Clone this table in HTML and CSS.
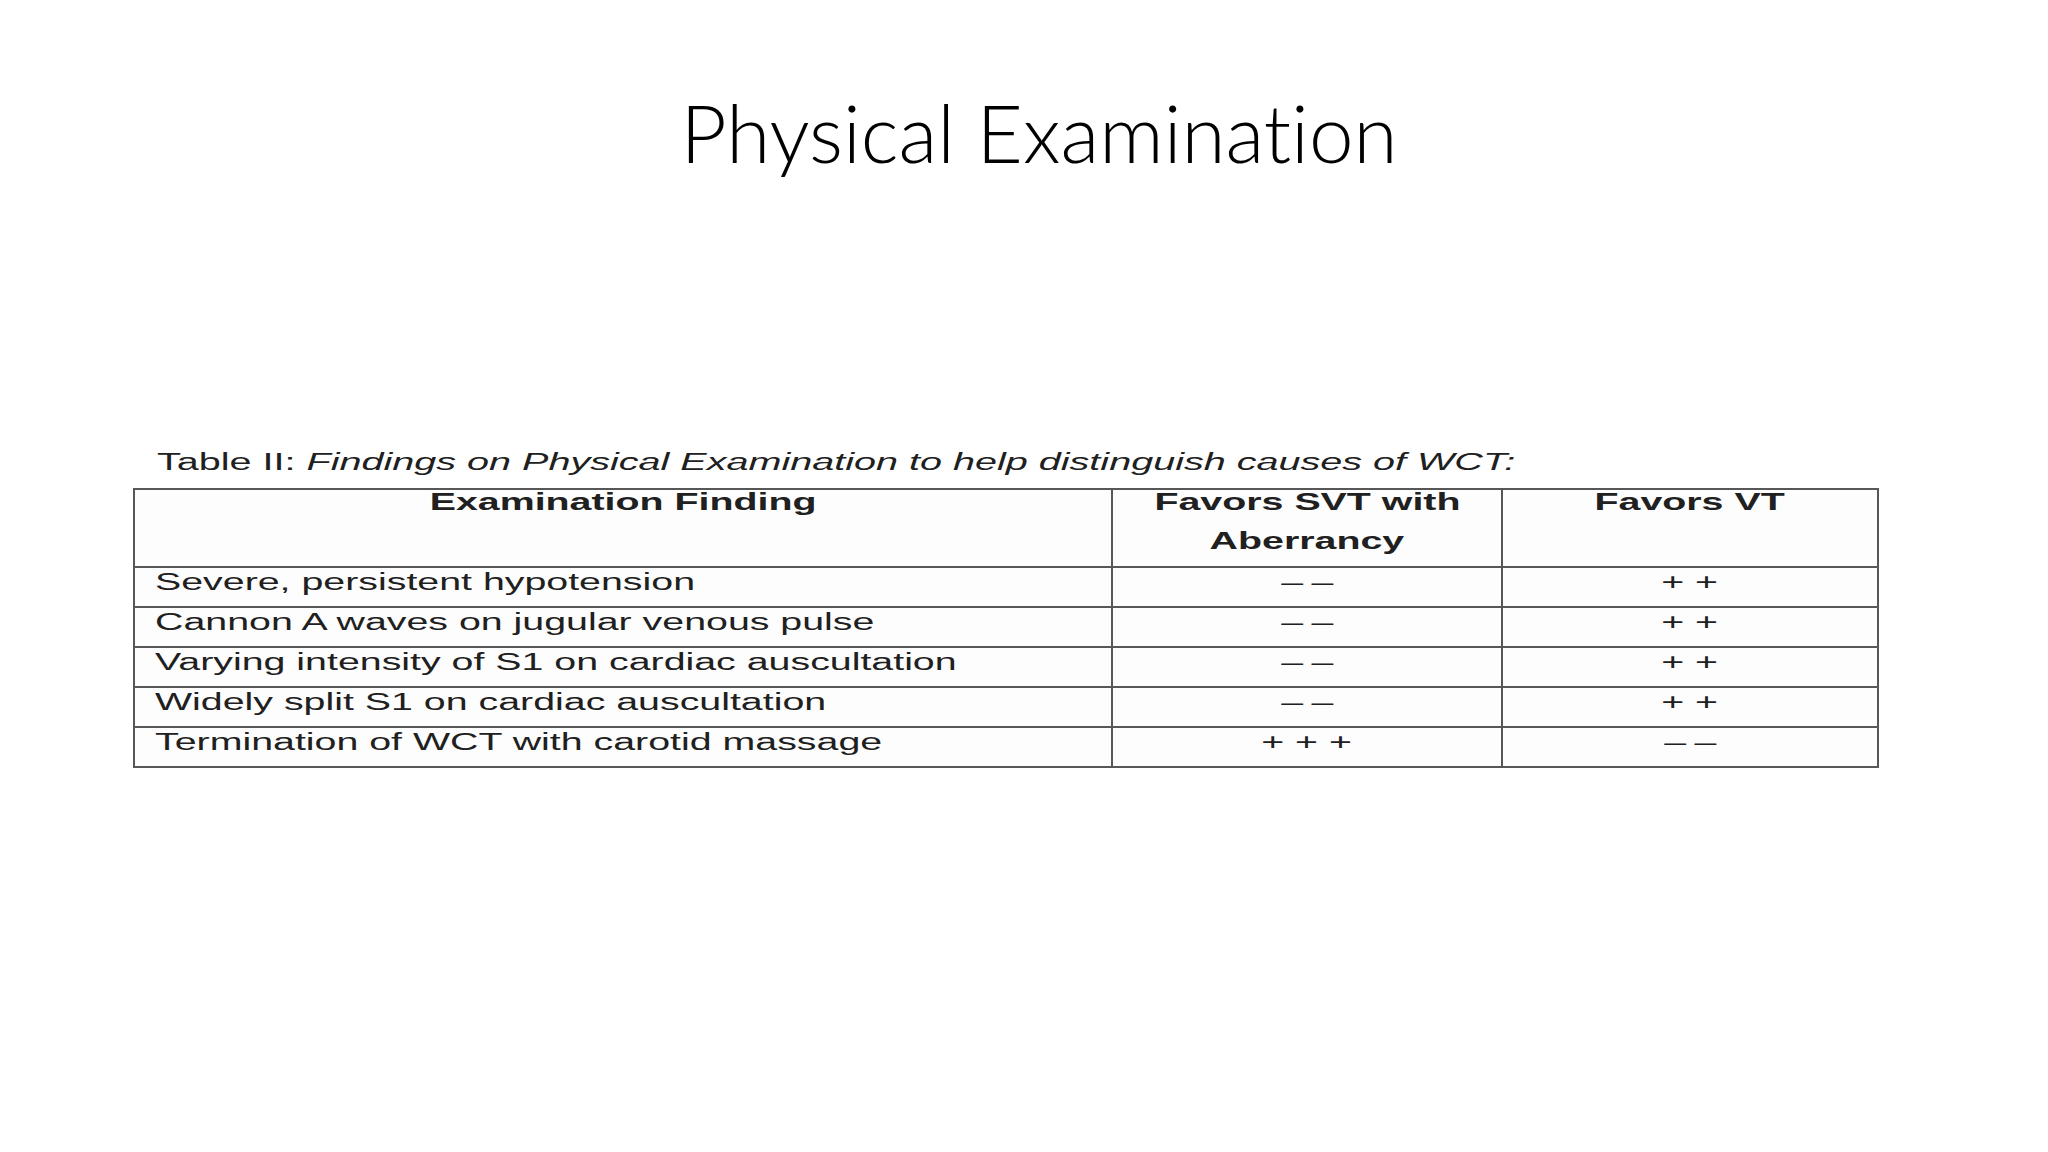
FILE: index.html
```html
<!DOCTYPE html>
<html lang="en">
<head>
<meta charset="utf-8">
<title>Physical Examination</title>
<link rel="stylesheet" href="styles.css">
</head>
<body>
<main class="slide">
  <h1 class="title">Physical Examination</h1>
  <section class="figure">
    <p class="caption"><span class="sx">Table II: <em>Findings on Physical Examination to help distinguish causes of WCT:</em></span></p>
    <table class="findings">
      <colgroup><col class="c1"><col class="c2"><col class="c3"></colgroup>
      <thead>
        <tr>
          <th class="hd"><span class="sx">Examination Finding</span></th>
          <th class="hd"><div class="stack"><span class="sx">Favors SVT with</span><span class="sx">Aberrancy</span></div></th>
          <th class="hd"><span class="sx">Favors VT</span></th>
        </tr>
      </thead>
      <tbody>
        <tr><td class="finding"><span class="sx">Severe, persistent hypotension</span></td><td class="mark"><span class="sx minus">&ndash;&ndash;</span></td><td class="mark"><span class="sx">+ +</span></td></tr>
        <tr><td class="finding"><span class="sx">Cannon A waves on jugular venous pulse</span></td><td class="mark"><span class="sx minus">&ndash;&ndash;</span></td><td class="mark"><span class="sx">+ +</span></td></tr>
        <tr><td class="finding"><span class="sx">Varying intensity of S1 on cardiac auscultation</span></td><td class="mark"><span class="sx minus">&ndash;&ndash;</span></td><td class="mark"><span class="sx">+ +</span></td></tr>
        <tr><td class="finding"><span class="sx">Widely split S1 on cardiac auscultation</span></td><td class="mark"><span class="sx minus">&ndash;&ndash;</span></td><td class="mark"><span class="sx">+ +</span></td></tr>
        <tr><td class="finding"><span class="sx">Termination of WCT with carotid massage</span></td><td class="mark"><span class="sx">+ + +</span></td><td class="mark"><span class="sx minus">&ndash;&ndash;</span></td></tr>
      </tbody>
    </table>
  </section>
</main>
</body>
</html>
```
FILE: styles.css
```css
* { box-sizing: border-box; }
html, body { margin: 0; padding: 0; }
body {
  width: 2048px;
  height: 1152px;
  overflow: hidden;
  background: #ffffff;
  color: #202020;
  font-family: "Liberation Sans", Arial, sans-serif;
}
.slide { display: flex; flex-direction: column; }
.title {
  margin: 84px 0 0;
  padding-left: 30px;
  text-align: center;
  font-family: Lato, "Open Sans", sans-serif;
  font-weight: 300;
  font-size: 80px;
  line-height: 96px;
  color: #000;
  font-variant-ligatures: none;
  font-feature-settings: "liga" 0, "clig" 0;
}
.figure {
  margin: 270px 0 0 133px;
  width: 1744px;
}
.caption {
  margin: 0 0 14px;
  padding-left: 24px;
  font-size: 23px;
  line-height: 24px;
}
.caption em { font-style: italic; }
.caption .sx { transform: scaleX(1.72); }
.sx {
  display: inline-block;
  white-space: nowrap;
  transform: scaleX(1.71);
  transform-origin: left center;
}
.findings {
  border-collapse: collapse;
  table-layout: fixed;
  width: 1744px;
  font-size: 23px;
  line-height: 24px;
  background: #fdfdfd;
}
.c1 { width: 978px; }
.c2 { width: 390px; }
.c3 { width: 376px; }
.findings th, .findings td {
  border: 2px solid #575757;
  padding: 0;
  vertical-align: top;
}
.findings thead tr { height: 78px; }
.findings tbody tr { height: 40px; }
.findings .hd {
  font-weight: bold;
  text-align: center;
  padding-top: 0;
}
.hd .sx, .mark .sx { transform-origin: center center; }
.stack {
  display: flex;
  flex-direction: column;
  align-items: center;
  gap: 15px;
}
.findings td { padding-top: 2px; }
.findings .finding { padding-left: 20px; text-align: left; }
.findings .mark { text-align: center; }
.minus { letter-spacing: 5px; padding-left: 5px; }
```
